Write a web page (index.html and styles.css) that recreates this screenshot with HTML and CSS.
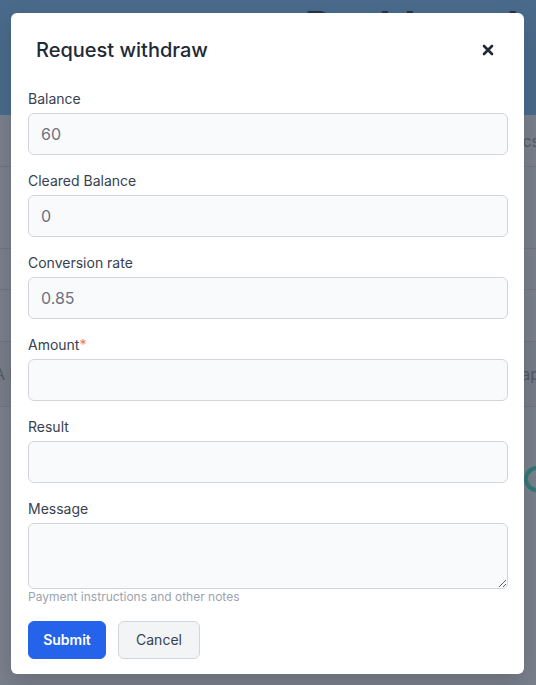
FILE: index.html
```html
<!DOCTYPE html>
<html lang="en">
<head>
<meta charset="utf-8">
<title>Request withdraw</title>
<link rel="stylesheet" href="styles.css">
</head>
<body>
<div class="page">
  <div class="page-header">
    <div class="page-title">Dashboard</div>
  </div>
  <div class="rows">
    <div class="row r1"><span class="bg-right bg-r1">Analytics</span></div>
    <div class="row r2"></div>
    <div class="row r3"></div>
    <div class="row r4"></div>
    <div class="row r5"><span class="bg-left">A l</span><span class="bg-right bg-r5">ap</span></div>
    <div class="row r6"><span class="bg-ring"></span></div>
  </div>
</div>

<div class="modal">
  <div class="modal-header">
    <h2 class="modal-title">Request withdraw</h2>
    <button class="close" type="button" aria-label="Close">
      <svg width="12" height="12" viewBox="0 0 12 12"><path d="M2 2 L10 10 M10 2 L2 10" stroke="#1f2937" stroke-width="2.6" stroke-linecap="round"/></svg>
    </button>
  </div>
  <form class="modal-body">
    <div class="field">
      <label class="label">Balance</label>
      <input class="input" type="text" value="60" readonly>
    </div>
    <div class="field">
      <label class="label">Cleared Balance</label>
      <input class="input" type="text" value="0" readonly>
    </div>
    <div class="field">
      <label class="label">Conversion rate</label>
      <input class="input" type="text" value="0.85" readonly>
    </div>
    <div class="field">
      <label class="label">Amount<span class="req">*</span></label>
      <input class="input" type="text">
    </div>
    <div class="field">
      <label class="label">Result</label>
      <input class="input" type="text">
    </div>
    <div class="field">
      <label class="label">Message</label>
      <textarea class="input textarea"></textarea>
      <div class="help">Payment instructions and other notes</div>
    </div>
    <div class="actions">
      <button class="btn btn-primary" type="button">Submit</button>
      <button class="btn btn-secondary" type="button">Cancel</button>
    </div>
  </form>
</div>
</body>
</html>
```

FILE: styles.css
```css
* { box-sizing: border-box; }

html, body {
  margin: 0;
  padding: 0;
  width: 536px;
  height: 685px;
  overflow: hidden;
  font-family: Inter, "Noto Sans", "Liberation Sans", sans-serif;
  background: #7a808c;
}

.page {
  width: 536px;
  height: 685px;
  background: #7a808c;
  overflow: hidden;
}

.page-header {
  height: 115px;
  background: #4a6a8b;
  position: relative;
  overflow: hidden;
}

.page-title {
  position: absolute;
  left: 305px;
  top: 2px;
  font-size: 40px;
  font-weight: 700;
  color: #243447;
  line-height: 48px;
}

.rows {
  display: flex;
  flex-direction: column;
}

.row {
  border-bottom: 1px solid #6f7481;
  position: relative;
  display: flex;
  align-items: center;
  justify-content: space-between;
  color: #545a66;
  font-size: 16px;
  overflow: hidden;
}

.r1 { height: 52px; }
.r2 { height: 82px; }
.r3 { height: 41px; }
.r4 { height: 52px; }
.r5 { height: 65px; background: #777d89; }
.r6 { height: 116px; border-bottom: none; }

.bg-right {
  margin-left: auto;
  white-space: nowrap;
}

.bg-r1 { margin-right: -4px; }
.bg-r5 { margin-right: -4px; }

.bg-left {
  margin-left: -6px;
}

.bg-ring {
  position: absolute;
  right: -14px;
  top: 59px;
  width: 26px;
  height: 26px;
  border-radius: 50%;
  border: 4px solid #2f7a78;
  border-right-color: #3a5f88;
}

.modal {
  position: absolute;
  left: 11px;
  top: 13px;
  width: 513px;
  height: 661px;
  background: #ffffff;
  border-radius: 6px;
  box-shadow: 0 10px 25px rgba(0, 0, 0, 0.15);
}

.modal-header {
  display: flex;
  align-items: center;
  justify-content: space-between;
  padding: 23px 30px 0 25px;
  height: 51px;
}

.modal-title {
  margin: 0;
  font-size: 20px;
  line-height: 28px;
  font-weight: 500;
  color: #1f2937;
}

.close {
  border: none;
  background: transparent;
  padding: 0;
  width: 12px;
  height: 12px;
  display: flex;
  cursor: pointer;
}

.modal-body {
  padding: 25px 16px 15px 17px;
  margin: 0;
}

.field {
  display: flex;
  flex-direction: column;
  margin-bottom: 16px;
}

.label {
  display: block;
  font-size: 14px;
  line-height: 20px;
  color: #374151;
  margin-bottom: 4px;
}

.req {
  color: #f87171;
}

.input {
  display: block;
  width: 100%;
  height: 42px;
  border: 1px solid #d1d5db;
  border-radius: 6px;
  background: #f9fafb;
  padding: 0 12px;
  font-family: Inter, "Noto Sans", "Liberation Sans", sans-serif;
  font-size: 16px;
  color: #6b7280;
  outline: none;
}

.textarea {
  height: 66px;
  padding: 8px 12px;
  resize: vertical;
}

.help {
  font-size: 12px;
  line-height: 16px;
  color: #9ca3af;
}

.actions {
  display: flex;
  gap: 12px;
}

.btn {
  height: 38px;
  padding: 0;
  border-radius: 6px;
  font-family: Inter, "Noto Sans", "Liberation Sans", sans-serif;
  font-size: 14px;
  line-height: 20px;
  cursor: pointer;
  text-align: center;
}

.btn-primary {
  width: 78px;
  background: #2563eb;
  border: 1px solid #2563eb;
  color: #ffffff;
  font-weight: 600;
}

.btn-secondary {
  width: 82px;
  background: #f3f4f6;
  border: 1px solid #d1d5db;
  color: #374151;
  font-weight: 400;
}
```
